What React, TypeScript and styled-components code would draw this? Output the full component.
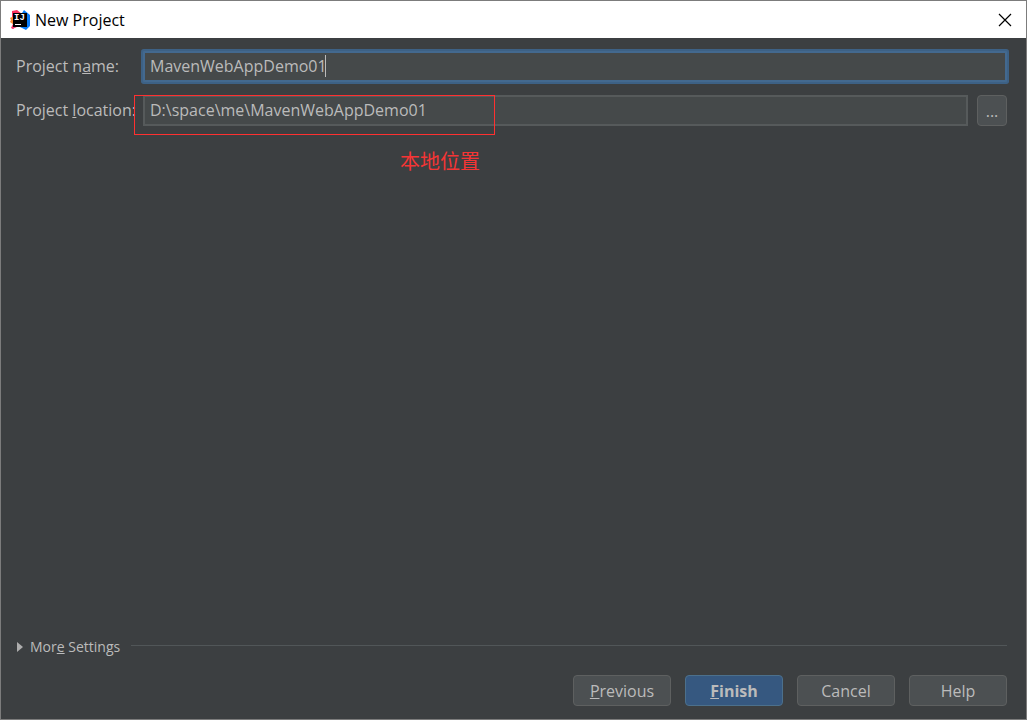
import React, { useId, useState } from "react";
import styled, { createGlobalStyle } from "styled-components";

const GlobalStyle = createGlobalStyle`
  *, *::before, *::after { box-sizing: border-box; }
  body {
    margin: 0;
    background: #3c3f41;
    font-family: "Open Sans", "Noto Sans CJK SC", sans-serif;
    font-size: 16px;
  }
`;

const Dialog = styled.div`
  display: flex;
  flex-direction: column;
  min-height: 100vh;
  border: 1px solid #7c7c7c;
  background: #3c3f41;
  color: #bbbbbb;
`;

const TitleBar = styled.header`
  display: flex;
  align-items: center;
  gap: 5px;
  height: 37px;
  padding: 0 14px 0 9px;
  background: #ffffff;
  color: #000000;
`;

const Title = styled.h1`
  flex: 1;
  margin: 0;
  font-size: 16px;
  font-weight: 400;
  line-height: 20px;
`;

const CloseButton = styled.button`
  display: flex;
  padding: 0;
  border: 0;
  background: none;
  color: inherit;
`;

const Form = styled.form`
  display: flex;
  flex: 1;
  flex-direction: column;
  padding: 13px 19px 13px 15px;
`;

const Fields = styled.div`
  display: grid;
  grid-template-columns: 119px 1fr;
  column-gap: 8px;
  row-gap: 13px;
  flex: 1;
  align-content: start;
`;

const Label = styled.label`
  line-height: 31px;
  white-space: nowrap;
`;

const FieldLine = styled.div`
  position: relative;
  display: flex;
  gap: 9px;
`;

const TextInput = styled.input<{ $active?: boolean }>`
  flex: 1;
  min-width: 0;
  height: 31px;
  padding: 0 5px 1px;
  border: 2px solid #565a5b;
  outline: 0;
  background: #45494a;
  color: #bbbbbb;
  font: inherit;
  ${(p) => p.$active && "border-color: #43698f; border-radius: 1px; box-shadow: 0 0 0 2px #3d6185;"}
`;

const Caret = styled.span`
  position: absolute;
  top: 4px;
  left: 182px;
  width: 1px;
  height: 22px;
  background: #bbbbbb;
`;

const Highlight = styled.div`
  position: absolute;
  top: 0;
  left: -9px;
  width: 361px;
  height: 40px;
  border: 1px solid #ff3030;
  pointer-events: none;
`;

const Note = styled.p`
  position: absolute;
  top: 52px;
  left: 257px;
  margin: 0;
  color: #f53535;
  font-family: "Noto Sans CJK SC", sans-serif;
  font-size: 20px;
  line-height: 28px;
`;

const Button = styled.button<{ $primary?: boolean; $compact?: boolean }>`
  width: ${(p) => (p.$compact ? 30 : 98)}px;
  height: 31px;
  padding: 0;
  border: 1px solid ${(p) => (p.$primary ? "#4c708c" : "#5e6060")};
  border-radius: 4px;
  background: ${(p) => (p.$primary ? "#365880" : "#4c5052")};
  color: #bbbbbb;
  font: inherit;
  font-weight: ${(p) => (p.$primary ? 700 : 400)};
`;

const MoreSettings = styled.div`
  display: flex;
  align-items: flex-start;
  gap: 11px;
  margin-bottom: 18px;
  &::after {
    content: "";
    flex: 1;
    height: 1px;
    margin-top: 8px;
    background: #515658;
  }
`;

const Disclosure = styled.button`
  display: flex;
  align-items: center;
  gap: 6px;
  padding: 0;
  border: 0;
  background: none;
  color: inherit;
  font: inherit;
  font-size: 14px;
  line-height: 20px;
`;

const Actions = styled.footer`
  display: flex;
  justify-content: flex-end;
  gap: 14px;
`;

const LogoLetters = styled.text`
  fill: #ffffff;
  font-family: "Liberation Mono", monospace;
  font-size: 9px;
  font-weight: 700;
`;

const Logo = () => (
  <svg width="20" height="20" viewBox="0 0 20 20" aria-hidden="true">
    <path d="M2 1l5-1 5 4-2 10-7 5-2-1 2-4-1-7z" fill="#fc315f" />
    <path d="M0 8l4-2v9l-4-3 1-2z" fill="#fd8a32" />
    <path d="M12 3l2-3 6 5v11l-4 4-6-3z" fill="#087cfa" />
    <path d="M2 19l1-4h8l-4 2z" fill="#f0437b" />
    <rect x="3" y="3" width="14" height="14" fill="#000000" />
    <LogoLetters x="4" y="10">IJ</LogoLetters>
    <rect x="5" y="14" width="6" height="1" fill="#ffffff" />
  </svg>
);

export default function App() {
  const [name, setName] = useState("MavenWebAppDemo01");
  const [location, setLocation] = useState("D:\\space\\me\\MavenWebAppDemo01");
  const nameId = useId();
  const locationId = useId();

  return (
    <>
      <GlobalStyle />
      <Dialog role="dialog" aria-label="New Project">
        <TitleBar>
          <Logo />
          <Title>New Project</Title>
          <CloseButton type="button" aria-label="Close">
            <svg width="14" height="14" viewBox="0 0 14 14" aria-hidden="true">
              <path d="M1 1l12 12M13 1L1 13" stroke="currentColor" strokeWidth="1.2" />
            </svg>
          </CloseButton>
        </TitleBar>
        <Form onSubmit={(e) => e.preventDefault()}>
          <Fields>
            <Label htmlFor={nameId}>Project n<u>a</u>me:</Label>
            <FieldLine>
              <TextInput $active id={nameId} value={name} onChange={(e) => setName(e.target.value)} />
              <Caret />
            </FieldLine>
            <Label htmlFor={locationId}>Project <u>l</u>ocation:</Label>
            <FieldLine>
              <TextInput id={locationId} value={location} onChange={(e) => setLocation(e.target.value)} />
              <Button type="button" $compact aria-label="Browse">...</Button>
              <Highlight />
              <Note>本地位置</Note>
            </FieldLine>
          </Fields>
          <MoreSettings>
            <Disclosure type="button" aria-expanded={false}>
              <svg width="8" height="10" viewBox="0 0 8 10" aria-hidden="true">
                <path d="M1 0v10l6-5z" fill="#adadad" />
              </svg>
              <span>Mor<u>e</u> Settings</span>
            </Disclosure>
          </MoreSettings>
          <Actions>
            <Button type="button"><u>P</u>revious</Button>
            <Button type="submit" $primary><u>F</u>inish</Button>
            <Button type="button">Cancel</Button>
            <Button type="button">Help</Button>
          </Actions>
        </Form>
      </Dialog>
    </>
  );
}
